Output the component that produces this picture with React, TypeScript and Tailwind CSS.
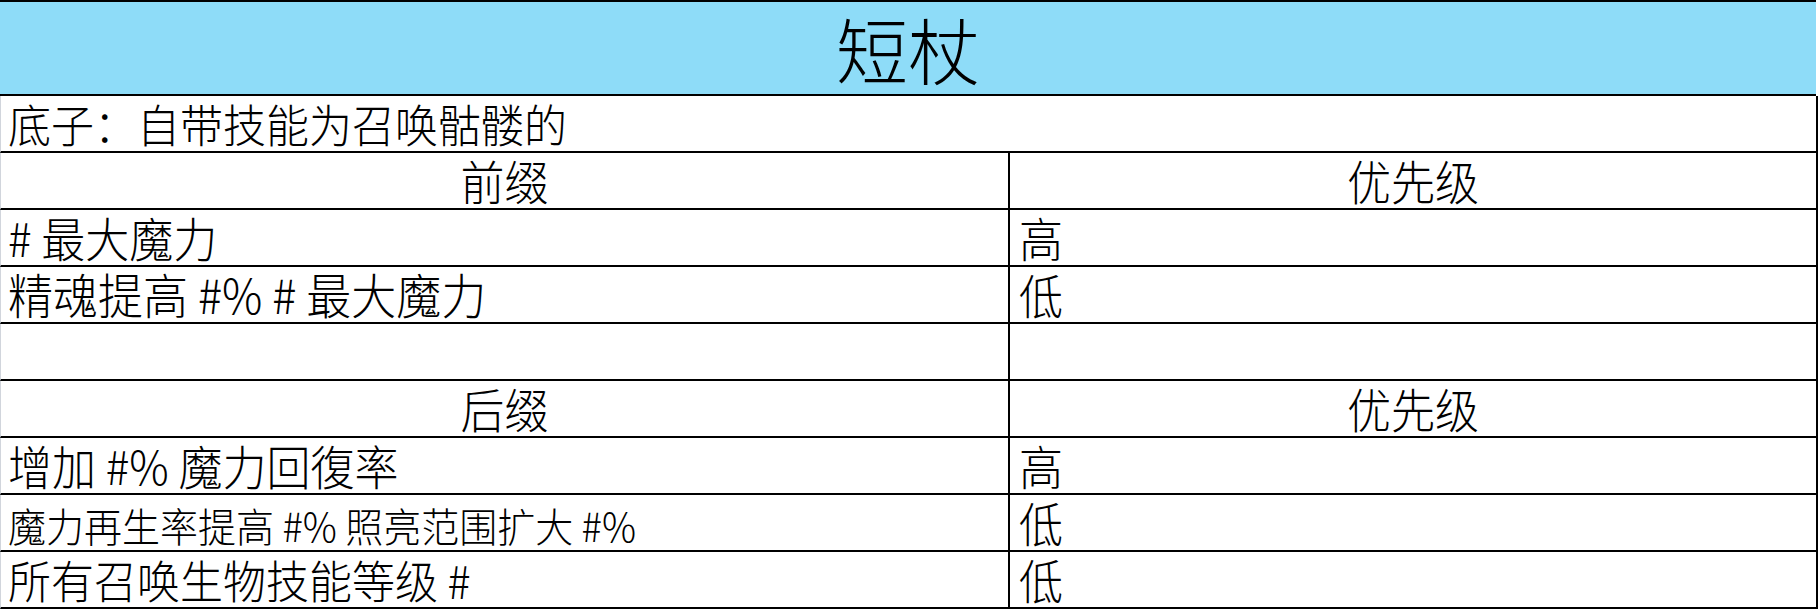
import React from "react";

const font = { fontFamily: '"Noto Sans CJK SC", "Noto Sans", sans-serif' };

type Row = {
  left: string;
  right?: string;
  span?: boolean;
  center?: boolean;
  size: string;
};

const rows: Row[] = [
  { left: "底子：自带技能为召唤骷髅的", span: true, size: "text-[43px]" },
  { left: "前缀", right: "优先级", center: true, size: "text-[44px]" },
  { left: "# 最大魔力", right: "高", size: "text-[44px]" },
  { left: "精魂提高 #% # 最大魔力", right: "低", size: "text-[45px]" },
  { left: "", right: "", size: "text-[44px]" },
  { left: "后缀", right: "优先级", center: true, size: "text-[44px]" },
  { left: "增加 #% 魔力回復率", right: "高", size: "text-[44px]" },
  { left: "魔力再生率提高 #% 照亮范围扩大 #%", right: "低", size: "text-[38px]" },
  { left: "所有召唤生物技能等级 #", right: "低", size: "text-[43px]" },
];

function T({ children }: { children: React.ReactNode }) {
  return <span className="inline-block origin-bottom scale-y-[1.06] whitespace-nowrap">{children}</span>;
}

export default function App() {
  return (
    <div className="w-[1819px] h-[610px] overflow-hidden bg-white text-black font-light" style={font}>
      <div className="h-[96px] border-t-2 border-b-2 border-black bg-[#8edcf8] flex items-center justify-center mr-[3px]">
        <span className="text-[72px] leading-normal">短杖</span>
      </div>
      {rows.map((r, i) => (
        <div
          key={i}
          className="h-[57px] flex border-b-2 border-black border-r-2 border-l border-l-gray-300 mr-[1px]"
        >
          {r.span ? (
            <div className={"flex-1 flex items-end pl-[7px] pb-[5px] leading-none " + r.size}>
              <T>{r.left}</T>
            </div>
          ) : (
            <>
              <div
                className={
                  "w-[1009px] shrink-0 flex items-end pb-[5px] leading-none border-r-2 border-black " +
                  (r.center ? "justify-center " : "pl-[7px] ") +
                  r.size
                }
              >
                <T>{r.left}</T>
              </div>
              <div
                className={
                  "flex-1 flex items-end pb-[5px] leading-none text-[44px] " +
                  (r.center ? "justify-center" : "pl-[9px]")
                }
              >
                <T>{r.right}</T>
              </div>
            </>
          )}
        </div>
      ))}
    </div>
  );
}
